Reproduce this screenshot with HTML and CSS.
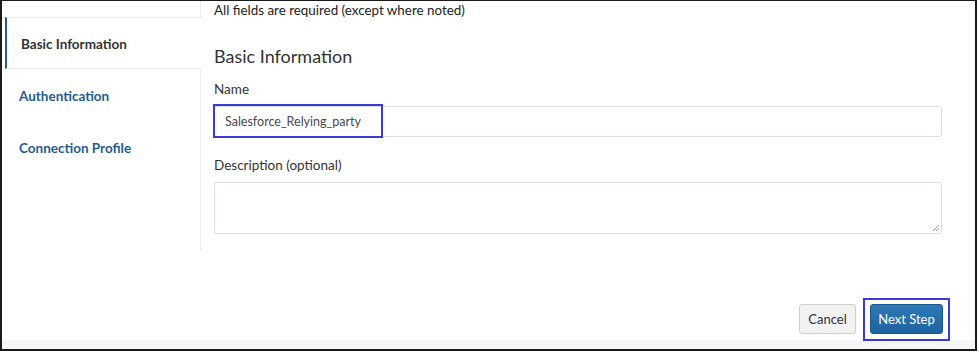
FILE: index.html
```html
<!DOCTYPE html>
<html>
<head>
<meta charset="utf-8">
<link rel="stylesheet" href="styles.css">
</head>
<body>
<div class="frame">
  <div class="content">
    <nav class="sidebar">
      <div class="tab active">Basic Information</div>
      <div class="tab">Authentication</div>
      <div class="tab">Connection Profile</div>
    </nav>
    <main class="main">
      <p class="note">All fields are required (except where noted)</p>
      <h2 class="heading">Basic Information</h2>
      <div class="field">
        <label class="label">Name</label>
        <div class="input-wrap">
          <div class="input">Salesforce_Relying_party</div>
          <span class="highlight hl-name"></span>
        </div>
      </div>
      <div class="field">
        <label class="label">Description (optional)</label>
        <div class="textarea">
          <svg class="grip" width="8" height="8" viewBox="0 0 8 8"><path d="M7 1 L1 7 M7 4 L4 7" stroke="#999" stroke-width="1" fill="none"/></svg>
        </div>
      </div>
    </main>
  </div>
  <div class="actions">
    <button class="btn cancel">Cancel</button>
    <div class="next-wrap">
      <button class="btn next">Next Step</button>
      <span class="highlight hl-next"></span>
    </div>
  </div>
  <div class="footer"></div>
</div>
</body>
</html>
```
FILE: styles.css
```css
* { box-sizing: border-box; }
html, body { margin: 0; padding: 0; background: #fff; }
body { font-family: Lato, "Open Sans", sans-serif; color: #333; width: 979px; height: 352px; }

.frame {
  width: 977px;
  height: 351px;
  border: 1px solid #1a1a1a;
  border-left-width: 2px;
  border-right-width: 2px;
  border-bottom-width: 2px;
  display: flex;
  flex-direction: column;
}

.content {
  display: flex;
  height: 250px;
}

.sidebar {
  width: 199px;
  border-right: 1px solid #ececec;
  padding-top: 16px;
  flex-shrink: 0;
}

.tab {
  height: 52px;
  display: flex;
  align-items: center;
  padding-left: 17px;
  padding-top: 2px;
  font-size: 13.5px;
  font-weight: bold;
  color: #1f5b8e;
}

.tab.active {
  margin-left: 3px;
  margin-right: -1px;
  border-left: 2px solid #1f5b8e;
  border-top: 1px solid #ececec;
  border-bottom: 1px solid #ececec;
  background: #fff;
  color: #333;
  padding-left: 14px;
  position: relative;
}

.main {
  flex: 1;
  padding: 0 33px 0 13px;
}

.note {
  margin: 0;
  font-size: 13.4px;
  line-height: 18px;
  color: #222;
}

.heading {
  margin: 25px 0 0;
  font-size: 18px;
  font-weight: normal;
  line-height: 24px;
  color: #333;
}

.field { margin-top: 12px; }

.label {
  display: block;
  font-size: 13.5px;
  line-height: 18px;
  color: #333;
  margin-bottom: 8px;
}

.input-wrap { position: relative; }

.input {
  height: 31px;
  border: 1px solid #dcdfe3;
  border-radius: 3px;
  padding: 0 10px;
  font-size: 12.5px;
  line-height: 29px;
  color: #4a4a4a;
}

.field + .field { margin-top: 19px; }

.textarea {
  position: relative;
  height: 52px;
  border: 1px solid #dcdfe3;
  border-radius: 3px;
}

.grip { position: absolute; right: 1px; bottom: 1px; }

.highlight {
  position: absolute;
  border: 2px solid #3a3ad4;
  pointer-events: none;
}

.hl-name { left: -1px; top: -2px; width: 170px; height: 34px; }

.actions {
  display: flex;
  justify-content: flex-end;
  align-items: center;
  gap: 14px;
  padding-right: 32px;
  margin-top: 53px;
  height: 30px;
}

.btn {
  font-family: Lato, "Open Sans", sans-serif;
  font-size: 13px;
  height: 30px;
  border-radius: 3px;
  cursor: pointer;
}

.cancel {
  width: 57px;
  background: #f2f2f2;
  border: 1px solid #cfcfcf;
  color: #333;
}

.next-wrap { position: relative; }

.next {
  width: 73px;
  background: linear-gradient(#2d78b6, #1f62a0);
  border: 1px solid #1c5890;
  color: #fff;
}

.hl-next { left: -7px; top: -6px; width: 87px; height: 43px; }

.footer {
  margin-top: auto;
  height: 9px;
  background: #f5f6f8;
}
```
